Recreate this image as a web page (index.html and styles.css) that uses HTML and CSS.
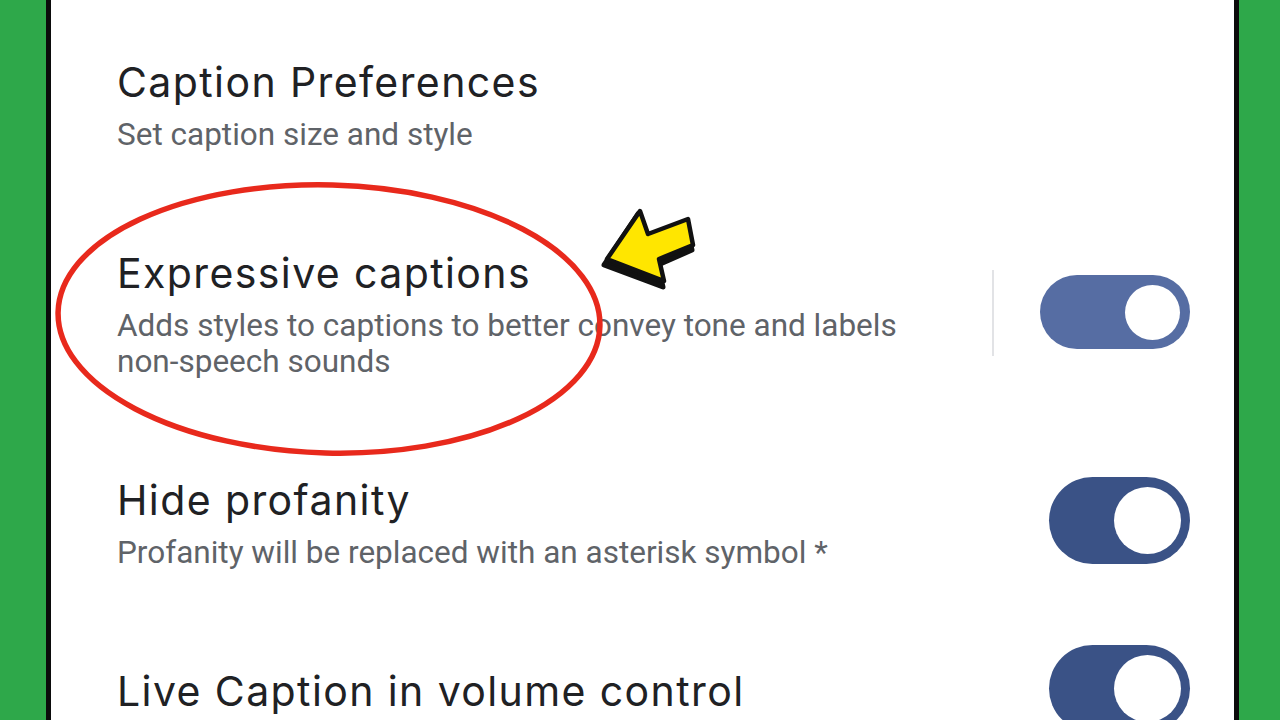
FILE: index.html
```html
<!DOCTYPE html>
<html lang="en">
<head>
    <meta charset="UTF-8">
    <meta name="viewport" content="width=device-width, initial-scale=1.0">
    <title>Caption Preferences</title>
    <link rel="stylesheet" href="styles.css">
</head>
<body>
    <div class="frame">
        <main class="screen">
            <section class="row">
                <div class="text">
                    <h2 class="title">Caption Preferences</h2>
                    <p class="summary">Set caption size and style</p>
                </div>
            </section>

            <section class="row row-split">
                <div class="text">
                    <h2 class="title">Expressive captions</h2>
                    <p class="summary">Adds styles to captions to better convey tone and labels non-speech sounds</p>
                </div>
                <span class="divider"></span>
                <span class="switch switch-light"><span class="thumb"></span></span>
            </section>

            <section class="row">
                <div class="text">
                    <h2 class="title">Hide profanity</h2>
                    <p class="summary">Profanity will be replaced with an asterisk symbol *</p>
                </div>
                <span class="switch"><span class="thumb"></span></span>
            </section>

            <section class="row row-last">
                <div class="text">
                    <h2 class="title">Live Caption in volume control</h2>
                </div>
                <span class="switch"><span class="thumb"></span></span>
            </section>

            <!-- markup drawn over the list: ring + pointer -->
            <svg class="marks" width="1183" height="720" viewBox="51 0 1183 720">
                <ellipse cx="329" cy="319" rx="271" ry="134" fill="none" stroke="#e8291c" stroke-width="5.5" transform="rotate(1.5 329 319)"/>
                <polygon points="606,262 640,211 648,234 688,219 694,247 660,262 665,284"
                         fill="#111" stroke="#111" stroke-width="5" stroke-linejoin="round" transform="translate(-2 3)"/>
                <polygon points="607,259 640,211 648,234 688,219 693,245 659,259 664,281"
                         fill="#ffe600" stroke="#111" stroke-width="4.5" stroke-linejoin="round"/>
            </svg>
        </main>
    </div>
</body>
</html>
```

FILE: styles.css
```css
html, body {
    margin: 0;
    height: 100%;
    overflow: hidden;
}

body {
    background-color: #2ea84a;
    font-family: Roboto, "Noto Sans", sans-serif;
}

.frame {
    height: 720px;
    padding-left: 46px;
}

.screen {
    position: relative;
    width: 1183px;
    height: 662px;
    background-color: #fff;
    border-left: 5px solid #0b0b0b;
    border-right: 5px solid #0b0b0b;
    overflow: hidden;
    padding-top: 58px;
    box-sizing: content-box;
}

.row {
    display: flex;
    align-items: center;
    padding: 0 44px 96px 66px;
}

.text {
    flex: 1;
}

.title {
    margin: 0;
    font-family: Inter, "Open Sans", sans-serif;
    font-weight: 400;
    font-size: 41px;
    line-height: 48px;
    color: #202124;
    letter-spacing: 1.4px;
}

.summary {
    margin: 11px 0 0;
    font-size: 31.5px;
    line-height: 36px;
    color: #5f6368;
    max-width: 800px;
}

.divider {
    width: 2px;
    height: 86px;
    background-color: #e2e3e6;
    margin: 0 46px 4px 0;
}

.switch {
    position: relative;
    width: 141px;
    height: 87px;
    border-radius: 44px;
    background-color: #3a5286;
    margin-bottom: 6px;
}

.switch .thumb {
    position: absolute;
    right: 9px;
    top: 10px;
    width: 67px;
    height: 67px;
    border-radius: 50%;
    background-color: #fff;
}

.switch-light {
    width: 150px;
    height: 74px;
    border-radius: 37px;
    background-color: #566da3;
    margin-bottom: 5px;
}

.switch-light .thumb {
    right: 10px;
    top: 9.5px;
    width: 55px;
    height: 55px;
}

/* last switch is taller than its one-line row; let it overhang */
.row-last .switch {
    margin: -25px 0 -19px;
}

.marks {
    position: absolute;
    left: 0;
    top: 0;
    pointer-events: none;
}
```
